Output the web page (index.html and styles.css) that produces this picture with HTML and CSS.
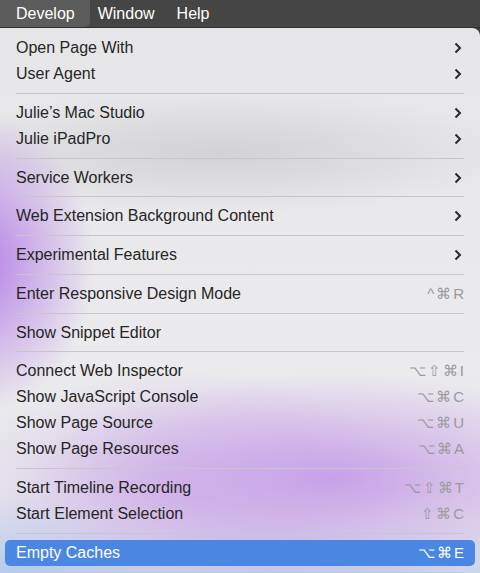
FILE: index.html
```html
<!DOCTYPE html>
<html>
<head>
  <meta charset="UTF-8">
  <meta name="viewport" content="width=device-width, initial-scale=1.0">
  <title>Develop menu</title>
  <link rel="stylesheet" href="styles.css">
</head>
<body>
  <div class="menubar">
    <span class="bar-item active">Develop</span>
    <span class="bar-item">Window</span>
    <span class="bar-item">Help</span>
  </div>

  <div class="menu">
    <div class="row"><span>Open Page With</span><svg class="chev" width="8" height="12" viewBox="0 0 8 12"><polyline points="1.5,1.5 6,6 1.5,10.5"/></svg></div>
    <div class="row"><span>User Agent</span><svg class="chev" width="8" height="12" viewBox="0 0 8 12"><polyline points="1.5,1.5 6,6 1.5,10.5"/></svg></div>
    <div class="sep"></div>
    <div class="row"><span>Julie’s Mac Studio</span><svg class="chev" width="8" height="12" viewBox="0 0 8 12"><polyline points="1.5,1.5 6,6 1.5,10.5"/></svg></div>
    <div class="row"><span>Julie iPadPro</span><svg class="chev" width="8" height="12" viewBox="0 0 8 12"><polyline points="1.5,1.5 6,6 1.5,10.5"/></svg></div>
    <div class="sep"></div>
    <div class="row"><span>Service Workers</span><svg class="chev" width="8" height="12" viewBox="0 0 8 12"><polyline points="1.5,1.5 6,6 1.5,10.5"/></svg></div>
    <div class="sep"></div>
    <div class="row"><span>Web Extension Background Content</span><svg class="chev" width="8" height="12" viewBox="0 0 8 12"><polyline points="1.5,1.5 6,6 1.5,10.5"/></svg></div>
    <div class="sep"></div>
    <div class="row"><span>Experimental Features</span><svg class="chev" width="8" height="12" viewBox="0 0 8 12"><polyline points="1.5,1.5 6,6 1.5,10.5"/></svg></div>
    <div class="sep"></div>
    <div class="row"><span>Enter Responsive Design Mode</span><span class="keys">^⌘R</span></div>
    <div class="sep"></div>
    <div class="row"><span>Show Snippet Editor</span></div>
    <div class="sep"></div>
    <div class="row"><span>Connect Web Inspector</span><span class="keys">⌥⇧⌘I</span></div>
    <div class="row"><span>Show JavaScript Console</span><span class="keys">⌥⌘C</span></div>
    <div class="row"><span>Show Page Source</span><span class="keys">⌥⌘U</span></div>
    <div class="row"><span>Show Page Resources</span><span class="keys">⌥⌘A</span></div>
    <div class="sep"></div>
    <div class="row"><span>Start Timeline Recording</span><span class="keys">⌥⇧⌘T</span></div>
    <div class="row"><span>Start Element Selection</span><span class="keys">⇧⌘C</span></div>
    <div class="sep"></div>
    <div class="row selected"><span>Empty Caches</span><span class="keys">⌥⌘E</span></div>
    <div class="sep"></div>
  </div>
</body>
</html>
```

FILE: styles.css
```css
body {
  margin: 0;
  font-family: "Liberation Sans", Arial, sans-serif;
  font-size: 16px;
  background: #3f3f3f;
  overflow: hidden;
}
.menubar {
  display: flex;
  height: 27px;
  background: #454545;
  color: #fff;
  border-bottom: 1px solid #2f2f2f;
}
.bar-item {
  display: flex;
  align-items: center;
  padding: 0 14px 0 8px;
}
.bar-item.active {
  background: #5c5c5c;
  border-radius: 0 0 5px 0;
  padding: 0 15px 0 16px;
}
.menu {
  padding: 7px 5px 0 5px;
  border-radius: 0 8px 0 0;
  height: 560px;
  background:
    radial-gradient(ellipse 115px 150px at -20px 235px, rgba(182, 128, 232, 1), rgba(182, 128, 232, 0) 100%),
    radial-gradient(ellipse 300px 105px at 330px 450px, rgba(200, 160, 232, 1), rgba(200, 160, 232, 0) 100%),
    radial-gradient(ellipse 220px 120px at 180px 460px, rgba(205, 175, 232, 0.7), rgba(205, 175, 232, 0) 100%),
    radial-gradient(ellipse 380px 90px at 300px 575px, rgba(168, 200, 238, 1), rgba(168, 200, 238, 0) 100%),
    radial-gradient(ellipse 170px 100px at 10px 565px, rgba(170, 198, 238, 1), rgba(170, 198, 238, 0) 100%),
    radial-gradient(ellipse 300px 60px at 220px 125px, rgba(200, 200, 206, 0.7), rgba(200, 200, 206, 0) 100%),
    linear-gradient(#e6e6e8, #ebebed 60%, #e4e4ea);
}
.row {
  display: flex;
  align-items: center;
  justify-content: space-between;
  height: 26px;
  padding: 0 11px;
  color: #262626;
  border-radius: 5px;
}
.chev {
  fill: none;
  stroke: #2a2a2a;
  stroke-width: 2;
  margin-right: 2px;
}
.keys {
  color: #9a9a9e;
  letter-spacing: 2px;
  margin-right: -2px;
  font-size: 15px;
}
.sep {
  height: 12.75px;
  display: flex;
  align-items: center;
  padding: 0 11px;
}
.sep::before {
  content: "";
  flex: 1;
  height: 1px;
  background: #c7c7cb;
}
.row.selected {
  background: #4b87e2;
  color: #fff;
}
.row.selected .keys {
  color: #fff;
}
```
